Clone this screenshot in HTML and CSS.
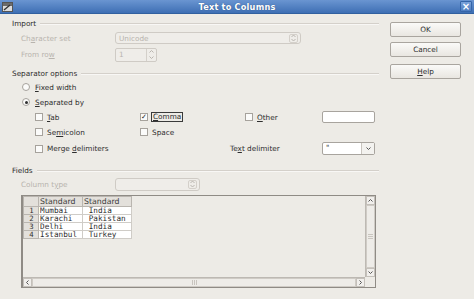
FILE: index.html
```html
<!DOCTYPE html>
<html>
<head>
  <title>Text to Columns</title>
  <link rel="stylesheet" href="styles.css">
</head>
<body>

  <div class="titlebar">
    <svg class="app-icon" width="11" height="10" viewBox="0 0 11 10">
      <rect x="0.5" y="0.5" width="10" height="9" fill="#dcdcdc" stroke="#555"/>
      <rect x="1" y="1" width="9" height="3" fill="#6b6b6b"/>
      <path d="M2 8 L8 3" stroke="#333" stroke-width="1.4"/>
    </svg>
    <span class="title">Text to Columns</span>
    <span class="close">&#215;</span>
  </div>

  <div class="content">
    <div class="main">

      <div class="heading h-import"><span>Import</span></div>
      <div class="row r-charset disabled">
        <span class="label">Ch<u>a</u>racter set</span>
        <div class="combo combo-charset">
          <span>Unicode</span>
          <span class="updown">
            <svg width="5" height="8" viewBox="0 0 5 8"><path d="M0.5 3 L2.5 1 L4.5 3 M0.5 5 L2.5 7 L4.5 5" fill="none" stroke="#b8b4ae"/></svg>
          </span>
        </div>
      </div>
      <div class="row r-fromrow disabled">
        <span class="label">From ro<u>w</u></span>
        <div class="spin">
          <span>1</span>
          <span class="spin-btns">
            <svg width="5" height="3" viewBox="0 0 5 3"><path d="M0.5 2.5 L2.5 0.5 L4.5 2.5" fill="none" stroke="#b8b4ae"/></svg>
            <svg width="5" height="3" viewBox="0 0 5 3"><path d="M0.5 0.5 L2.5 2.5 L4.5 0.5" fill="none" stroke="#b8b4ae"/></svg>
          </span>
        </div>
      </div>

      <div class="heading h-sep"><span>Separator options</span></div>
      <div class="row r-radio">
        <span class="radio"></span><span><u>F</u>ixed width</span>
      </div>
      <div class="row r-radio r-gap1">
        <span class="radio checked"></span><span><u>S</u>eparated by</span>
      </div>

      <div class="row r-checks r-gap1">
        <div class="opt"><span class="check"></span><span><u>T</u>ab</span></div>
        <div class="opt"><span class="check checked">&#10003;</span><span class="focus"><u>C</u>omma</span></div>
        <div class="opt"><span class="check"></span><span><u>O</u>ther</span></div>
        <div class="entry"></div>
      </div>
      <div class="row r-checks r-gap1">
        <div class="opt"><span class="check"></span><span>Se<u>m</u>icolon</span></div>
        <div class="opt"><span class="check"></span><span>Space</span></div>
      </div>
      <div class="row r-merge">
        <div class="opt"><span class="check"></span><span>Merge <u>d</u>elimiters</span></div>
        <span class="label">Te<u>x</u>t delimiter</span>
        <div class="dropdown">
          <span class="value">"</span>
          <span class="arrow">
            <svg width="5" height="3" viewBox="0 0 5 3"><path d="M0.5 0.5 L2.5 2.5 L4.5 0.5" fill="none" stroke="#555"/></svg>
          </span>
        </div>
      </div>

      <div class="heading h-fields"><span>Fields</span></div>
      <div class="row r-coltype disabled">
        <span class="label">Column t<u>y</u>pe</span>
        <div class="combo combo-type">
          <span></span>
          <span class="updown">
            <svg width="5" height="8" viewBox="0 0 5 8"><path d="M0.5 3 L2.5 1 L4.5 3 M0.5 5 L2.5 7 L4.5 5" fill="none" stroke="#b8b4ae"/></svg>
          </span>
        </div>
      </div>

      <div class="preview">
        <div class="grid-area">
          <table class="sheet">
            <tr class="head">
              <td class="num"></td><td class="c1">Standard</td><td class="c2">Standard</td>
            </tr>
            <tr><td class="num">1</td><td>Mumbai</td><td> India</td></tr>
            <tr><td class="num">2</td><td>Karachi</td><td> Pakistan</td></tr>
            <tr><td class="num">3</td><td>Delhi</td><td> India</td></tr>
            <tr><td class="num">4</td><td>Istanbul</td><td> Turkey</td></tr>
          </table>
        </div>
        <div class="vscroll">
          <span class="sbtn">
            <svg width="5" height="3" viewBox="0 0 5 3"><path d="M0.5 2.5 L2.5 0.5 L4.5 2.5" fill="none" stroke="#555"/></svg>
          </span>
          <span class="vthumb"><i></i><i></i><i></i></span>
          <span class="sbtn">
            <svg width="5" height="3" viewBox="0 0 5 3"><path d="M0.5 0.5 L2.5 2.5 L4.5 0.5" fill="none" stroke="#555"/></svg>
          </span>
        </div>
        <div class="hscroll">
          <span class="sbtn">
            <svg width="3" height="5" viewBox="0 0 3 5"><path d="M2.5 0.5 L0.5 2.5 L2.5 4.5" fill="none" stroke="#555"/></svg>
          </span>
          <span class="hthumb"><i></i><i></i><i></i></span>
          <span class="sbtn">
            <svg width="3" height="5" viewBox="0 0 3 5"><path d="M0.5 0.5 L2.5 2.5 L0.5 4.5" fill="none" stroke="#555"/></svg>
          </span>
        </div>
        <div class="corner"></div>
      </div>

    </div>

    <div class="buttons">
      <button class="btn btn-ok">OK</button>
      <button class="btn btn-cancel">Cancel</button>
      <button class="btn btn-help"><u>H</u>elp</button>
    </div>
  </div>

</body>
</html>
```

FILE: styles.css
```css
* { box-sizing: border-box; margin: 0; padding: 0; }

body {
  font-family: "DejaVu Sans", sans-serif;
  font-size: 7.3px;
  color: #2e2e2e;
  background: #edebe6;
  width: 474px;
  height: 299px;
  overflow: hidden;
}

u { text-decoration: underline; text-underline-offset: 1px; }

/* title bar */
.titlebar {
  height: 14px;
  display: grid;
  grid-template-columns: 1fr auto 1fr;
  align-items: center;
  padding: 0 2px;
  background: linear-gradient(#6a95d1, #3e6fb4);
  border-bottom: 1px solid #31609f;
}

.app-icon { display: block; }

.title {
  color: white;
  font-weight: bold;
  font-size: 8.2px;
  letter-spacing: 0.2px;
  text-shadow: 0 0 1px #23477a;
}

.close {
  justify-self: end;
  width: 12px;
  height: 11px;
  line-height: 10px;
  text-align: center;
  color: white;
  font-weight: bold;
  font-size: 10px;
  background: linear-gradient(#7aa2da, #4c7cc0);
  border: 1px solid #3565a8;
  border-radius: 1px;
}

/* layout */
.content {
  display: flex;
}

.main {
  width: 367px;
  margin-left: 12px;
}

.buttons {
  width: 71px;
  margin-left: 11px;
  padding-top: 8px;
  display: flex;
  flex-direction: column;
}

/* section headings with rule */
.heading {
  height: 14px;
  display: flex;
  align-items: center;
  gap: 4px;
}

.heading::after {
  content: "";
  flex: 1;
  height: 1px;
  background: #d4d0ca;
  box-shadow: 0 1px 0 #f8f7f5;
}

.h-import { margin-top: 2px; height: 15px; }
.h-sep { margin-top: 4px; }
.h-fields { margin-top: 7px; }

/* rows */
.row {
  height: 14px;
  display: flex;
  align-items: center;
}

.r-gap1 { margin-top: 1px; }

.disabled { color: #b8b4ae; }

.r-charset .label,
.r-fromrow .label,
.r-coltype .label {
  width: 103px;
  padding-left: 9px;
}

.r-fromrow { margin-top: 2px; height: 15px; }

.combo {
  height: 12px;
  display: flex;
  align-items: center;
  justify-content: space-between;
  padding: 0 2px 0 3px;
  border: 1px solid #cfcbc5;
  border-radius: 3px;
  background: #efede9;
}

.combo-charset { width: 186px; }
.combo-type { width: 85px; height: 13px; }

.updown {
  width: 9px;
  height: 9px;
  display: flex;
  align-items: center;
  justify-content: center;
  border: 1px solid #d4d0ca;
  border-radius: 2px;
}

.updown svg { display: block; }

.spin {
  width: 42px;
  height: 14px;
  display: flex;
  align-items: center;
  justify-content: space-between;
  padding-left: 3px;
  border: 1px solid #cfcbc5;
  border-radius: 2px;
  background: #efede9;
}

.spin-btns {
  width: 10px;
  height: 12px;
  display: flex;
  flex-direction: column;
  align-items: center;
  justify-content: space-around;
  border-left: 1px solid #d4d0ca;
}

.spin-btns svg { display: block; }

/* radio buttons */
.r-radio { padding-left: 10px; gap: 5px; }

.radio {
  width: 8px;
  height: 8px;
  border-radius: 50%;
  border: 1px solid #a6a29c;
  background: #fbfbfa;
  display: flex;
  align-items: center;
  justify-content: center;
}

.radio.checked::after {
  content: "";
  width: 3px;
  height: 3px;
  border-radius: 50%;
  background: #2e2e2e;
}

/* check boxes */
.r-checks {
  padding-left: 23px;
  display: grid;
  grid-template-columns: 105px 105px 77px 53px;
  align-items: center;
}

.opt {
  display: flex;
  align-items: center;
  gap: 4px;
}

.check {
  width: 8px;
  height: 8px;
  border: 1px solid #a6a29c;
  background: #fbfbfa;
  font-size: 7px;
  line-height: 6px;
  text-align: center;
  font-weight: bold;
  color: #222;
}

.focus {
  padding: 0 1px;
  outline: 1px solid #3a3a3a;
  line-height: 8px;
}

.entry {
  height: 12px;
  background: white;
  border: 1px solid #a8a49e;
  border-radius: 2px;
}

.r-merge {
  margin-top: 2px;
  height: 15px;
  padding-left: 23px;
  display: grid;
  grid-template-columns: 195px 92px 53px;
  align-items: center;
}

.dropdown {
  height: 13px;
  display: flex;
  background: white;
  border: 1px solid #a8a49e;
  border-radius: 2px;
}

.dropdown .value {
  flex: 1;
  padding-left: 3px;
  line-height: 10px;
}

.dropdown .arrow {
  width: 13px;
  display: flex;
  align-items: center;
  justify-content: center;
  border-left: 1px solid #c9c5bf;
  background: #f3f2ef;
}

.r-coltype { height: 14px; }

/* preview grid */
.preview {
  margin-top: 4px;
  margin-left: 9px;
  width: 355px;
  height: 93px;
  display: grid;
  grid-template-columns: 1fr 10px;
  grid-template-rows: 1fr 10px;
  border: 1px solid #8f8b85;
  border-left-width: 2px;
  background: #edebe6;
}

.grid-area { overflow: hidden; }

.sheet {
  border-collapse: collapse;
  font-family: "DejaVu Sans Mono", monospace;
  font-size: 7.7px;
}

.sheet td {
  height: 7.5px;
  line-height: 7px;
  padding: 0 0 0 1px;
  border: 1px solid #cfccc7;
  background: white;
  white-space: pre;
}

.sheet .head td {
  height: 10px;
  font-family: "DejaVu Sans", sans-serif;
  font-size: 7.8px;
  background: #e3e0db;
  border-color: #b9b5af;
  color: #3c3c3c;
}

.sheet td.num {
  width: 15px;
  text-align: center;
  background: #e3e0db;
  border-color: #b9b5af;
  font-size: 7.3px;
}

.sheet td.c1 { width: 44px; }
.sheet td.c2 { width: 49px; }

.vscroll, .hscroll {
  display: flex;
  background: #e6e3de;
}

.vscroll {
  flex-direction: column;
  border-left: 1px solid #bdb9b3;
}

.hscroll {
  border-top: 1px solid #bdb9b3;
}

.sbtn {
  width: 9px;
  height: 9px;
  display: flex;
  align-items: center;
  justify-content: center;
  background: #f1efec;
  border: 1px solid #c4c0ba;
}

.vthumb, .hthumb {
  flex: 1;
  display: flex;
  align-items: center;
  justify-content: center;
  gap: 1px;
  background: #eeece8;
  border: 1px solid #cfcbc5;
}

.vthumb { flex-direction: column; }

.vthumb i { width: 5px; height: 1px; background: #c9c5bf; }
.hthumb i { width: 1px; height: 5px; background: #c9c5bf; }

.corner { background: #edebe6; }

/* buttons */
.btn {
  height: 15px;
  font-family: "DejaVu Sans", sans-serif;
  font-size: 7.3px;
  color: #2e2e2e;
  background: linear-gradient(#fafaf8, #e9e6e1);
  border: 1px solid #a9a59f;
  border-radius: 2px;
}

.btn-cancel { margin-top: 5px; }
.btn-help { margin-top: 7px; }
```
